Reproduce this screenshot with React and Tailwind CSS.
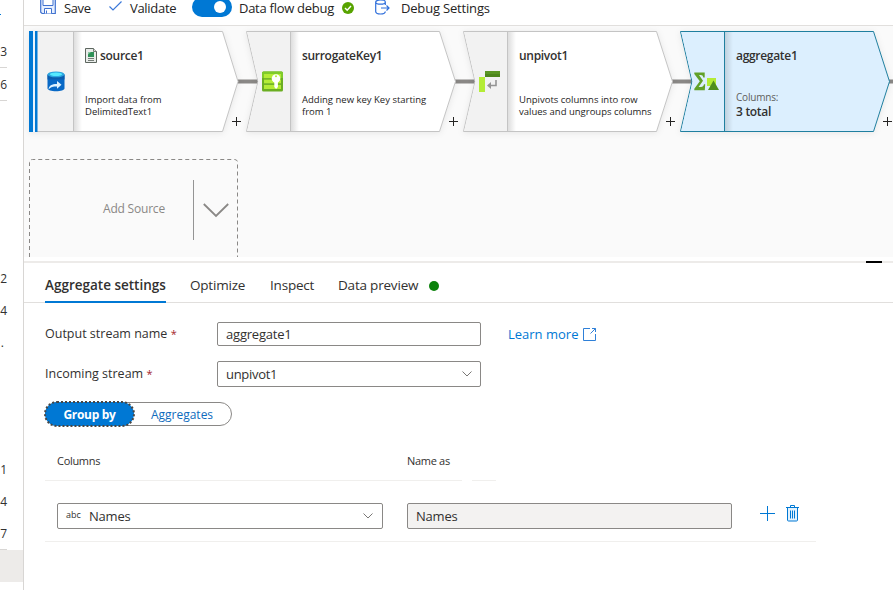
import React from "react";

const NODES = [
  {
    left: 5,
    name: "source1",
    lines: ["Import data from", "DelimitedText1"],
    source: true,
    Icon: SourceIcon,
  },
  {
    left: 222,
    name: "surrogateKey1",
    lines: ["Adding new key Key starting", "from 1"],
    Icon: KeyIcon,
  },
  {
    left: 439,
    name: "unpivot1",
    lines: ["Unpivots columns into row", "values and ungroups columns"],
    Icon: UnpivotIcon,
  },
  {
    left: 656,
    name: "aggregate1",
    total: "3 total",
    selected: true,
    Icon: AggregateIcon,
  },
];

function SourceIcon() {
  return (
    <svg width="18" height="21" viewBox="0 0 18 21">
      <path d="M0.5 3.5v14c0 1.6 3.8 2.7 8.5 2.7s8.5-1.1 8.5-2.7v-14z" fill="#0869c6" />
      <path d="M0.5 3.5v5h17v-5z" fill="#0a5cae" />
      <ellipse cx="9" cy="3.4" rx="8.5" ry="2.9" fill="#2ba6e0" />
      <ellipse cx="9" cy="3.2" rx="6" ry="1.7" fill="#55eaff" />
      <path d="M1.500 18.500c.6-4 3-5.500 8.500-5.500V10l4.500 3.800L10 17.800v-2.300c-4 0-6.500.5-8.500 3z" fill="#dff3ff" />
    </svg>
  );
}

function KeyIcon() {
  return (
    <svg width="21" height="21" viewBox="0 0 21 21">
      <rect x="0" y="0.500" width="21" height="20" rx="1.500" fill="#6bae22" />
      <path d="M0 2q0-1.500 1.500-1.500h18q1.500 0 1.500 1.500v5H0z" fill="#7fcb2b" />
      <path d="M2 3h17v4H2zM2 8.500h17v4H2zM2 14h17v4H2z" fill="#b4ec36" />
      <path d="M2 7h17v1.300H2zM2 12.500h17v1.300H2z" fill="#75b82a" />
      <circle cx="14" cy="7.500" r="4.300" fill="#fff" />
      <path d="M12.300 10h3.600v6l-1.800 2-1.800-2z" fill="#fff" />
      <circle cx="14" cy="5.300" r="1" fill="#b4ec36" />
    </svg>
  );
}

function UnpivotIcon() {
  return (
    <svg width="21" height="21" viewBox="0 0 21 21">
      <rect x="6" y="0" width="15" height="6" fill="#5a9624" />
      <rect x="6" y="3" width="15" height="3" fill="#4e861d" />
      <rect x="0" y="6" width="6" height="15" fill="#b4ec36" />
      <path d="M17 9v5.500h-7" fill="none" stroke="#949494" strokeWidth="1.600" />
      <path d="M12 11l-4 3.500 4 3.500z" fill="#949494" />
    </svg>
  );
}

function AggregateIcon() {
  return (
    <svg width="25" height="19" viewBox="0 0 25 19">
      <path
        d="M.3.500h10.400v5H9.300C9 3.800 8.300 3 6.500 3H5l4 5.700L4.600 15H7c1.700 0 2.500-.8 3-2.700h1.200l-.4 6H.3v-1.500l5.500-7.500L.3 2z"
        fill="#62a128"
      />
      <rect x="13" y="6" width="9" height="8" fill="#b4ec36" />
      <path d="M19.500 8.500L25 18H14z" fill="#4f8f1b" />
    </svg>
  );
}

function CsvIcon() {
  return (
    <svg width="12" height="15" viewBox="0 0 12 15" className="-mt-px mr-[3px]">
      <path d="M.5.500h8l3 3v11H.5z" fill="#e9ecea" stroke="#5d665f" />
      <path d="M8.500.500v3h3" fill="#d8dcd8" stroke="#5d665f" strokeWidth=".8" />
      <rect x="3" y="4" width="6" height="5" fill="#2f9158" />
      <path d="M3 6.500L6 4H3z" fill="#8cc7a2" />
      <path d="M3 10.500h6M3 12.500h6" stroke="#747c76" />
    </svg>
  );
}

function Chevron() {
  return (
    <svg width="10" height="6" viewBox="0 0 10 6" fill="none" stroke="#797775">
      <path d="M.5.500L5 5 9.500.500" />
    </svg>
  );
}

function FlowNode({ node }) {
  const { name, lines, total, selected, source, Icon } = node;
  const stroke = selected ? "#1f7f9f" : "#c4c4c4";
  const fill = selected ? "#dceffe" : "#ffffff";
  const side = selected ? "#dceffe" : "#f2f2f2";
  const gradient = `shade-${name}`;

  return (
    <div className="absolute top-[5px] h-[102px] w-[234px]" style={{ left: node.left }}>
      <svg width="234" height="102" className="absolute inset-0 overflow-visible">
        <defs>
          <linearGradient id={gradient}>
            <stop offset="0" stopColor="#000" stopOpacity="0.13" />
            <stop offset="1" stopColor="#000" stopOpacity="0" />
          </linearGradient>
        </defs>
        <path d="M209 50.500h20" stroke="#8a8886" strokeWidth="4" />
        <g className="drop-shadow-[0_1px_3px_rgba(0,0,0,0.08)]">
          {source ? (
            <path d="M.5.500H193.500L209 50.500 193.500 100.500H.5z" fill={fill} stroke={stroke} />
          ) : (
            <path d="M.5.500H193.500L209.500 50.500 193.500 100.500H.5L12 50.500z" fill={fill} stroke={stroke} />
          )}
        </g>
        {source ? (
          <path d="M1 1h44v99H1z" fill={side} />
        ) : (
          <path d="M1.200 1H44v99H1.200L12.500 50.500z" fill={side} />
        )}
        <path d="M45 1h8v99h-8z" fill={`url(#${gradient})`} />
        <path d="M44.500.500v100" stroke={stroke} />
        {source && (
          <>
            <path d="M0 0h4v101H0zM6 0h2.500v101H6z" fill="#0078d4" />
            <path d="M4 0h2v101H4z" fill="#eaf4fc" />
          </>
        )}
      </svg>
      <div className="relative flex h-full">
        <div
          className={
            selected
              ? "flex w-[56px] items-center pb-[2px] pl-[14px]"
              : source
                ? "flex w-[56px] items-center pb-[2px] pl-[18px]"
                : "flex w-[56px] items-center pb-[2px] pl-4"
          }
        >
          <Icon />
        </div>
        <div className="flex h-full flex-col whitespace-nowrap">
          <div className="mt-4 flex h-[18px] items-center text-[12px] font-semibold leading-[18px] text-[#323130]">
            {source && <CsvIcon />}
            <span className="tracking-[-0.3px]">{name}</span>
          </div>
          {lines ? (
            <div className="mt-[29px] text-[9.500px] leading-3 text-[#252423]">
              {lines.map((line) => (
                <div key={line}>{line}</div>
              ))}
            </div>
          ) : (
            <div className="mt-[25px]">
              <div className="text-[10px] leading-[14px] tracking-[-0.2px] text-[#605e5c]">Columns:</div>
              <div className="text-[12px] font-semibold leading-4 tracking-[-0.3px] text-[#323130]">{total}</div>
            </div>
          )}
        </div>
      </div>
      <svg width="9" height="9" className="absolute left-[203px] top-[86px]" stroke="#252423">
        <path d="M4.500 0v9M0 4.500h9" />
      </svg>
    </div>
  );
}

function Toolbar() {
  return (
    <div className="flex h-[26px] shrink-0 items-start overflow-hidden whitespace-nowrap border-b border-[#e1dfdd] bg-white pl-4 text-[13px] leading-4 text-[#252423]">
      <svg width="16" height="14" viewBox="0 0 16 14" fill="none" className="mr-2">
        <path d="M.7 0v12.200l1.500 1.300h13.100V0" fill="#e7f0ff" stroke="#4072d0" strokeWidth="1.200" />
        <path d="M3 0v5.500h10V0" fill="#fff" stroke="#4072d0" />
        <path d="M4.500 13.500v-5h7v5M6.500 10.500v3" fill="#fff" stroke="#4072d0" />
      </svg>
      <span className="w-[45px] tracking-[-0.4px]">Save</span>
      <svg width="13" height="10" viewBox="0 0 13 10" fill="none" stroke="#3b78d8" strokeWidth="1.200" className="mr-2 mt-px">
        <path d="M.5 5.500L4 9 12.500.500" />
      </svg>
      <span className="w-[62px] tracking-[-0.3px]">Validate</span>
      <span className="-mt-[3px] mr-[7px] flex h-5 w-10 items-center justify-end rounded-full bg-[#0078d4] pr-[6px]">
        <span className="h-3 w-3 rounded-full bg-white" />
      </span>
      <span className="w-[103px] tracking-[-0.27px]">Data flow debug</span>
      <svg width="12" height="12" viewBox="0 0 12 12" className="mr-[21px] mt-[2px]">
        <circle cx="6" cy="6" r="6" fill="#57a300" />
        <path d="M3 6l2.200 2.300L9 4" fill="none" stroke="#fff" strokeWidth="1.400" />
      </svg>
      <svg width="15" height="15" viewBox="0 0 15 15" fill="none" stroke="#2f6fdb" strokeWidth="1.200" className="mr-[11px]">
        <path d="M.7 2v9.500c0 1.400 2 2.500 4.800 2.500s4.800-1.100 4.800-2.500M.7 2c0 1.300 2 2.200 4.800 2.200s4.800-.9 4.800-2.200V5M.7 2C.7.900 2.700 0 5.500 0s4.800.9 4.800 2" />
        <path d="M6 8h8M11.500 5.500L14 8l-2.500 2.500" />
      </svg>
      <span className="tracking-[-0.18px]">Debug Settings</span>
    </div>
  );
}

function Canvas() {
  return (
    <div className="relative h-[231px] shrink-0 overflow-hidden bg-[#fafafa]">
      {NODES.map((node) => (
        <FlowNode key={node.name} node={node} />
      ))}
      <div className="absolute left-[5px] top-[133px] flex h-[98px] w-[209px]">
        <svg width="209" height="98" className="absolute inset-0" fill="none" stroke="#8a8886">
          <path d="M.5 98V3.500q0-3 3-3h202q3 0 3 3V98" strokeDasharray="4 3" />
        </svg>
        <span className="w-[164px] whitespace-nowrap pl-[74px] text-[12px] leading-[100px] tracking-[-0.2px] text-[#8a8886]">
          Add Source
        </span>
        <span className="mt-[21px] h-[60px] w-px bg-[#949494]" />
        <svg width="26" height="15" viewBox="0 0 26 15" fill="none" stroke="#8a8886" strokeWidth="1.800" className="ml-[9px] mt-[44px]">
          <path d="M.8 1L13 13 25.200 1" />
        </svg>
      </div>
    </div>
  );
}

function Tabs() {
  return (
    <div className="flex h-10 shrink-0 whitespace-nowrap border-b border-[#e1dfdd] pl-[21px] text-[13.500px] leading-[44px] text-[#323130]">
      <span className="mr-6 h-10 w-[121px] border-b-2 border-[#0078d4] font-semibold text-[#323130]">
        Aggregate settings
      </span>
      <span className="w-[80px] tracking-[-0.2px]">Optimize</span>
      <span className="w-[68px] tracking-[-0.2px]">Inspect</span>
      <span className="w-[91px] tracking-[-0.2px]">Data preview</span>
      <span className="mt-[18px] h-[10px] w-[10px] rounded-full bg-[#0b820b]" />
    </div>
  );
}

function Label({ children }) {
  return (
    <span className="w-[172px] text-[12.500px] font-medium text-[#323130]">
      {children} <span className="text-[11px] font-normal text-[#a4262c]">*</span>
    </span>
  );
}

function Settings() {
  return (
    <div className="flex flex-col whitespace-nowrap pl-[21px] pt-[19px] text-[13px] text-[#323130]">
      <div className="flex h-6 items-center">
        <Label>Output stream name</Label>
        <div className="flex h-6 w-[264px] items-center rounded-[2px] border border-[#8a8886] pl-2 pt-px tracking-[-0.2px]">
          aggregate1
        </div>
        <a className="ml-[27px] flex items-center gap-[5px] text-[#0078d4]">
          <span className="pt-px">Learn more</span>
          <svg width="13" height="13" viewBox="0 0 13 13" fill="none" stroke="#2f80d8">
            <path d="M7 .500H.5v12h12V6M9 .500h3.500V4M12.500.500L7.500 5.500" />
          </svg>
        </a>
      </div>
      <div className="mt-[15px] flex h-[26px] items-center">
        <Label>Incoming stream</Label>
        <div className="flex h-[26px] w-[264px] items-center justify-between rounded-[2px] border border-[#8a8886] pl-2 pr-2">
          <span className="pt-[2px] tracking-[-0.3px]">unpivot1</span>
          <Chevron />
        </div>
      </div>

      <div className="mt-[15px] flex h-6 w-[187px] rounded-full border border-[#8a8886] text-[12px]">
        <div className="-m-px flex h-6 w-[89px] items-center justify-center rounded-full bg-[#0078d4] pt-[2px] font-bold tracking-[-0.3px] text-white outline-2 outline-dotted -outline-offset-1 outline-[#484644]">
          Group by
        </div>
        <div className="flex grow items-center justify-center pt-[2px] font-medium text-[#0f6cbd]">Aggregates</div>
      </div>

      <div className="mt-[26px] flex text-[11px] leading-[18px] tracking-[-0.3px]">
        <span className="w-[350px] pl-3">Columns</span>
        <span className="pl-3">Name as</span>
      </div>
      <div className="mt-[10px] flex gap-[10px]">
        <span className="h-px w-[417px] bg-[#f0efed]" />
        <span className="h-px w-6 bg-[#f0efed]" />
      </div>
      <div className="flex h-[61px] w-[771px] items-start border-b border-[#f0efed] pl-3 pt-[22px]">
        <div className="flex h-[26px] w-[326px] items-center rounded-[2px] border border-[#8a8886] pl-2 pr-[9px]">
          <span className="w-[23px] pb-[2px] text-[9px] leading-3">abc</span>
          <span className="grow pt-px tracking-[-0.2px]">Names</span>
          <Chevron />
        </div>
        <div className="ml-6 flex h-[26px] w-[325px] items-center rounded-[2px] border border-[#8a8886] bg-[#f3f2f1] pl-2 pt-px tracking-[-0.2px]">
          Names
        </div>
        <svg width="15" height="15" viewBox="0 0 15 15" stroke="#0078d4" className="ml-7 mt-[3px]">
          <path d="M7.500 0v15M0 7.500h15" />
        </svg>
        <svg width="13" height="17" viewBox="0 0 13 17" fill="none" stroke="#0078d4" className="ml-[11px] mt-[2px]">
          <path d="M2 3h9v13H2z" fill="#e3f2fd" stroke="none" />
          <path d="M0 2.500h13M4.500 2.500v-2h4v2M1.500 3v12q0 1 1 1h8q1 0 1-1V3" />
          <path d="M4.500 5.500v8M6.500 5.500v8M8.500 5.500v8" />
        </svg>
      </div>
    </div>
  );
}

function Rail() {
  return (
    <div className="flex w-6 shrink-0 flex-col border-r border-[#d8d6d4] text-[12px] leading-[33px] text-[#323130] [&>p]:w-[7px] [&>p]:text-right">
      <div className="h-[35px] pt-[14px]">
        <div className="h-px w-px bg-[#0078d4]" />
      </div>
      <p className="h-[33px] border-b border-[#d8d6d4]">3</p>
      <p className="h-[33px] border-b border-[#d8d6d4]">6</p>
      <p className="mt-[161px] h-8">2</p>
      <p className="h-8">4</p>
      <p className="h-8 pr-[3px]">.</p>
      <p className="mt-[95px] h-8">1</p>
      <p className="h-8">4</p>
      <p className="h-[33px] border-b border-[#d8d6d4]">7</p>
      <div className="h-8 bg-[#edebe9]" />
    </div>
  );
}

export default function App() {
  return (
    <div className="flex h-[590px] w-[893px] overflow-hidden bg-white font-['Open_Sans','Noto_Sans',sans-serif]">
      <Rail />
      <div className="flex min-w-0 grow flex-col">
        <Toolbar />
        <Canvas />
        <div className="mt-1 flex h-[2px] shrink-0 justify-end bg-[#edebe9] pr-[11px]">
          <span className="h-[2px] w-4 bg-black" />
        </div>
        <Tabs />
        <Settings />
      </div>
    </div>
  );
}
